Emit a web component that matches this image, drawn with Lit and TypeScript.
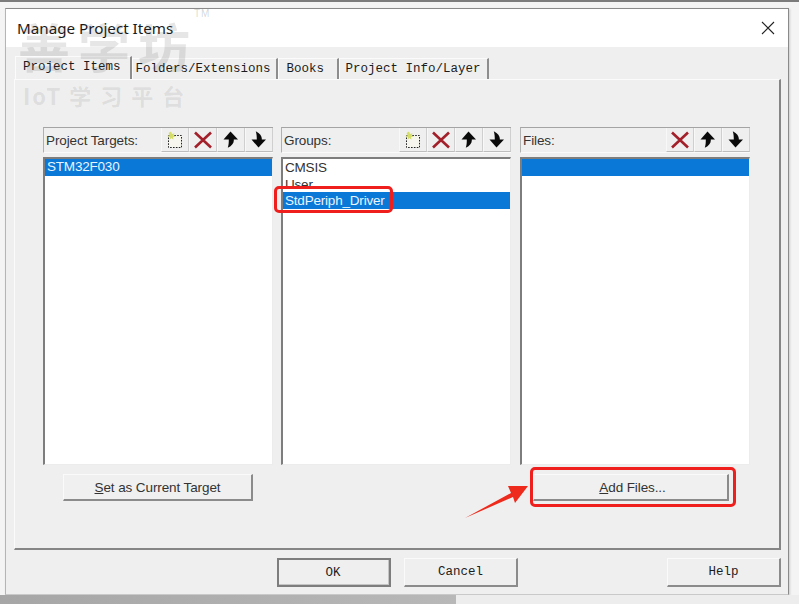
import { LitElement, html, css, svg } from "lit";
import { customElement } from "lit/decorators.js";

const newIcon = html`<svg width="20" height="20" viewBox="0 0 20 20"><rect x="3.5" y="5.5" width="13" height="12" fill="#f6f6ee" stroke="#222" stroke-width="1" stroke-dasharray="1.6 1.3"/><path d="M6 1.5l1 2.5 2.6-.8-1.2 2.3 2.4 1-2.6.6.2 2.6-1.9-1.8-1.9 1.8.2-2.6L2.2 6l2.4-.8L3.6 3z" fill="#d4dd68"/></svg>`;
const delIcon = html`<svg width="20" height="20" viewBox="0 0 20 20"><path d="M2 2.5L18 17.5M18 2.5L2 17.5" stroke="#a3202a" stroke-width="2.6" fill="none"/></svg>`;
const upPath = svg`<path d="M9.5 1.5L17 9.5H12.8V10.5C12.8 13 11 15.8 6.8 17.8C7.6 15 7.8 13 7.8 9.5H2.5Z" fill="#0a0a0a"/>`;
const upIcon = html`<svg width="20" height="20" viewBox="0 0 20 20">${upPath}</svg>`;
const downIcon = html`<svg width="20" height="20" viewBox="0 0 20 20"><g transform="matrix(1 0 0 -1 0 19)">${upPath}</g></svg>`;

@customElement("app-root")
export class AppRoot extends LitElement {
  static styles = css`
    :host { display: block; width: 799px; height: 604px; overflow: hidden; position: relative; background: #f4f4f4; font-family: "Liberation Sans", Arial, sans-serif; color: #222; }
    .topline { height: 2px; background: #7c7c7c; }
    .outer { padding: 6px 10px 0 5px; }
    .window { height: 587px; box-sizing: border-box; border: 1px solid #8a8a8a; border-bottom-color: #c9c9c9; border-left-color: #b5b5b5; background: #f0f0f0; display: flex; flex-direction: column; box-shadow: 1px 1px 2px #ccc; }
    .title { height: 38px; flex: none; background: #fff; display: flex; align-items: center; justify-content: space-between; padding: 0 13px 0 11px; font: 15.2px/20px "Noto Sans", "Open Sans", sans-serif; color: #1a1a1a; }
    .body { flex: 1; padding: 9px 7px 0 8px; display: flex; flex-direction: column; background: #efefef; }
    .tabs { display: flex; height: 23px; align-items: flex-end; font: 12.5px/21px "Liberation Mono", monospace; color: #1c1c1c; }
    .tab { height: 21px; box-sizing: border-box; padding: 0 4px 0 4px; border-right: 2px solid #8d8d8d; border-left: 1px solid #fbfbfb; border-top: 1px solid #fbfbfb; white-space: pre; }
    .tab.active { height: 23px; line-height: 20px; padding: 0 9px 0 7px; margin-left: 1px; }
    .t2 { width: 146px; padding-left: 3px; }
    .t3 { width: 61px; padding-left: 8px; }
    .t4 { width: 150px; padding-left: 6px; }
    .panel { height: 471px; box-sizing: border-box; border: 2px solid #858585; border-top: 1px solid #fbfbfb; border-left: 1px solid #fbfbfb; padding: 47px 0 0 28px; display: flex; gap: 8px; }
    .col { width: 230px; display: flex; flex-direction: column; }
    .col.files { margin-left: 1px; }
    .hdr { height: 26px; box-sizing: border-box; border-top: 1px solid #a4a4a4; border-left: 1px solid #b0b0b0; border-bottom: 1px solid #fafafa; display: flex; align-items: center; padding-left: 2px; font-size: 13.5px; letter-spacing: -0.1px; color: #333; }
    .hdr .lbl { flex: 1; }
    .tb { width: 28px; height: 24px; box-sizing: border-box; display: flex; align-items: center; justify-content: center; border-right: 1px solid #cfcfcf; border-bottom: 1px solid #bdbdbd; border-left: 1px solid #f8f8f8; }
    .list { margin-top: 4px; height: 308px; box-sizing: border-box; background: #fff; border-left: 2px solid #7d7d7d; border-top: 2px solid #7d7d7d; border-right: 1px solid #ececec; border-bottom: 1px solid #ececec; overflow: hidden; font-size: 13.5px; letter-spacing: -0.2px; color: #333; }
    .row { height: 16px; line-height: 17px; padding-left: 2px; }
    .row.first { height: 17px; }
    .row.sel { background: #0a78d7; color: #e9f4ff; height: 17px; }
    .row.top { margin-top: -1px; height: 18px; }
    .actions { margin-top: 9px; display: flex; justify-content: center; }
    .actions.shift { padding-right: 8px; }
    .btn { height: 27px; box-sizing: border-box; background: #f0f0f0; border: 2px solid #8b8b8b; border-top: 1px solid #fafafa; border-left: 1px solid #fafafa; display: flex; align-items: center; justify-content: center; font-size: 13.5px; letter-spacing: -0.1px; color: #333; white-space: pre; }
    .btn.target { width: 190px; }
    .btn.add { width: 196px; padding-left: 4px; }
    u { text-underline-offset: 1px; }
    .foot { flex: 1; display: flex; padding: 8px 0 0 263px; }
    .dbtn { width: 114px; height: 29px; box-sizing: border-box; border: 2px solid #8b8b8b; border-top: 1px solid #fafafa; border-left: 1px solid #fafafa; display: flex; align-items: center; justify-content: center; font: 12.5px "Liberation Mono", monospace; color: #1c1c1c; }
    .dbtn.ok { border: 2px solid #7d7d7d; box-shadow: inset -1px -1px 0 #c4c4c4; padding-right: 2px; }
    .dbtn.cancel { margin-left: 13px; }
    .dbtn.help { margin-left: 149px; }
    .shade { height: 9px; background: linear-gradient(90deg, #a6a6a6 0, #b8b8b8 456px, #ededed 456px); }
    .wm { position: absolute; pointer-events: none; color: rgba(60, 60, 60, 0.13); font-family: "Noto Sans CJK SC", sans-serif; white-space: pre; }
    .wm1 { left: 18px; top: 11px; font-size: 52px; line-height: 70px; font-weight: 700; letter-spacing: 8px; }
    .wm2 { left: 23px; top: 82px; font-size: 22px; line-height: 26px; font-weight: 700; letter-spacing: 2px; color: rgba(60, 60, 60, 0.11); }
    .wm3 { left: 194px; top: 8px; font: 10px/12px "Liberation Sans", sans-serif; letter-spacing: 1px; color: rgba(60, 60, 60, 0.22); }
    .mark { position: absolute; border: 3px solid #ee1f1c; border-radius: 5px; box-sizing: border-box; pointer-events: none; }
    .m1 { left: 274px; top: 186px; width: 119px; height: 27px; }
    .m2 { left: 530px; top: 467px; width: 206px; height: 40px; }
    .arrow { position: absolute; left: 460px; top: 480px; }
    .x { display: block; }
  `;

  private tools(withNew: boolean) {
    return html`${withNew ? html`<span class="tb">${newIcon}</span>` : ""}<span class="tb">${delIcon}</span><span class="tb">${upIcon}</span><span class="tb">${downIcon}</span>`;
  }

  render() {
    return html`
      <div class="topline"></div>
      <div class="outer">
        <div class="window">
          <div class="title">
            <span>Manage Project Items</span>
            <svg class="x" width="14" height="14" viewBox="0 0 14 14"><path d="M1 1L13 13M13 1L1 13" stroke="#222" stroke-width="1.1" fill="none"/></svg>
          </div>
          <div class="body">
            <div class="tabs">
              <div class="tab active">Project Items</div>
              <div class="tab t2">Folders/Extensions</div>
              <div class="tab t3">Books</div>
              <div class="tab t4">Project Info/Layer</div>
            </div>
            <div class="panel">
              <div class="col">
                <div class="hdr"><span class="lbl">Project Targets:</span>${this.tools(true)}</div>
                <div class="list"><div class="row sel top">STM32F030</div></div>
                <div class="actions"><div class="btn target"><span><u>S</u>et as Current Target</span></div></div>
              </div>
              <div class="col">
                <div class="hdr"><span class="lbl">Groups:</span>${this.tools(true)}</div>
                <div class="list">
                  <div class="row first">CMSIS</div>
                  <div class="row">User</div>
                  <div class="row sel">StdPeriph_Driver</div>
                </div>
              </div>
              <div class="col files">
                <div class="hdr"><span class="lbl">Files:</span>${this.tools(false)}</div>
                <div class="list"><div class="row sel top"></div></div>
                <div class="actions shift"><div class="btn add"><span><u>A</u>dd Files...</span></div></div>
              </div>
            </div>
            <div class="foot">
              <div class="dbtn ok">OK</div>
              <div class="dbtn cancel">Cancel</div>
              <div class="dbtn help">Help</div>
            </div>
          </div>
        </div>
      </div>
      <div class="shade"></div>
      <div class="wm wm1">善学坊</div>
      <div class="wm wm2">IoT 学 习 平 台</div>
      <div class="wm wm3">TM</div>
      <div class="mark m1"></div>
      <div class="mark m2"></div>
      <svg class="arrow" width="72" height="44" viewBox="460 480 72 44"><path d="M465 518L511 493L508 486L528 486L515 503L513 497Z" fill="#ee2a1c"/></svg>
    `;
  }
}
